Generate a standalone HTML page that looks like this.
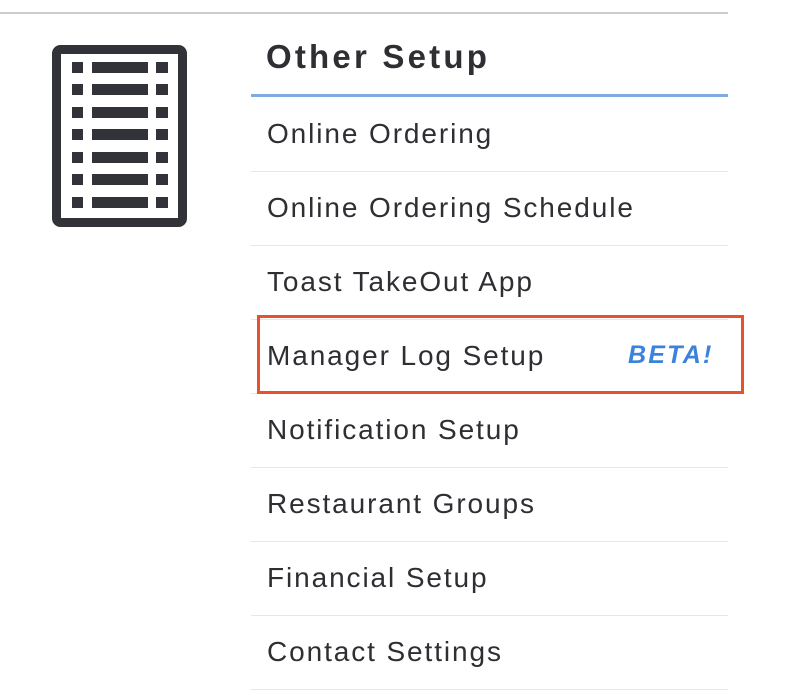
<html><head><style>
body{margin:0;width:788px;height:692px;background:#fff;position:relative;overflow:hidden;font-family:"Liberation Sans",sans-serif;color:#2e2e33}
.a{position:absolute}
.row{position:absolute;left:251px;width:477px;height:74px;border-bottom:1px solid #e6e6e6}
.row span{position:absolute;left:16px;top:21px;font-size:28px;letter-spacing:1.9px}
</style></head><body>
<div class="a" style="left:0;top:12px;width:728px;height:2px;background:#ccccd0"></div>
<svg class="a" style="left:52px;top:45px" width="136" height="183">
<rect x="4.5" y="4.5" width="126" height="173" rx="4" fill="none" stroke="#323338" stroke-width="9"/>
<g fill="#323338">
<rect x="20" y="17" width="11" height="11"/><rect x="40" y="17" width="56" height="11"/><rect x="104" y="17" width="12" height="11"/>
<rect x="20" y="39" width="11" height="11"/><rect x="40" y="39" width="56" height="11"/><rect x="104" y="39" width="12" height="11"/>
<rect x="20" y="62" width="11" height="11"/><rect x="40" y="62" width="56" height="11"/><rect x="104" y="62" width="12" height="11"/>
<rect x="20" y="84" width="11" height="11"/><rect x="40" y="84" width="56" height="11"/><rect x="104" y="84" width="12" height="11"/>
<rect x="20" y="107" width="11" height="11"/><rect x="40" y="107" width="56" height="11"/><rect x="104" y="107" width="12" height="11"/>
<rect x="20" y="129" width="11" height="11"/><rect x="40" y="129" width="56" height="11"/><rect x="104" y="129" width="12" height="11"/>
<rect x="20" y="152" width="11" height="11"/><rect x="40" y="152" width="56" height="11"/><rect x="104" y="152" width="12" height="11"/>
</g></svg>
<div class="a" style="left:266px;top:38px;font-size:33px;font-weight:bold;letter-spacing:3.2px">Other Setup</div>
<div class="a" style="left:251px;top:94px;width:477px;height:3px;background:#7faae2"></div>
<div class="row" style="top:97px"><span>Online Ordering</span></div>
<div class="row" style="top:171px"><span>Online Ordering Schedule</span></div>
<div class="row" style="top:245px"><span>Toast TakeOut App</span></div>
<div class="row" style="top:319px"><span>Manager Log Setup</span></div>
<div class="row" style="top:393px"><span>Notification Setup</span></div>
<div class="row" style="top:467px"><span>Restaurant Groups</span></div>
<div class="row" style="top:541px"><span>Financial Setup</span></div>
<div class="row" style="top:615px"><span>Contact Settings</span></div>
<div class="a" style="left:628px;top:341px;font-size:25px;font-weight:bold;font-style:italic;color:#3b82dc;letter-spacing:2.2px">BETA!</div>
<div class="a" style="left:257px;top:315px;width:481px;height:73px;border:3px solid #e8512c"></div>
</body></html>
